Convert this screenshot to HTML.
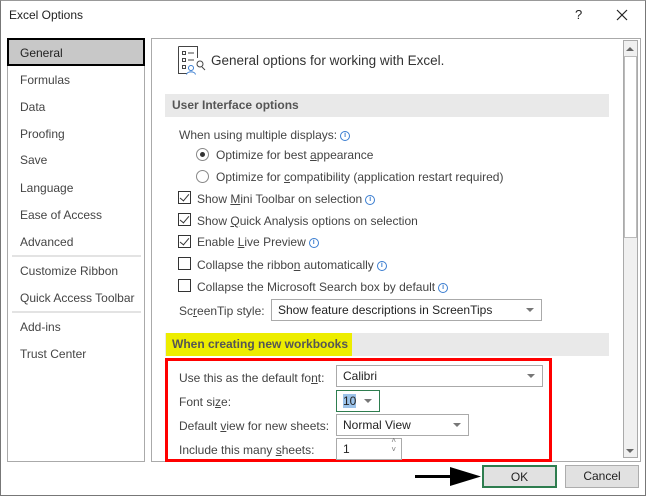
<!DOCTYPE html>
<html><head><meta charset="utf-8"><style>
*{margin:0;padding:0;box-sizing:border-box}
body{width:647px;height:496px;background:#fff;font-family:"Liberation Sans",sans-serif;font-size:12px;color:#444;position:relative;overflow:hidden}
.a{position:absolute;white-space:nowrap}
.win{position:absolute;left:0;top:0;width:646px;height:496px;border:1px solid #777;border-top-color:#999}
.nav{position:absolute;left:7px;top:38px;width:138px;height:424px;border:1px solid #aaa}
.ni{position:absolute;left:12px}
.sep{position:absolute;left:4px;width:129px;height:2px;background:#e3e3e3}
.main{position:absolute;left:151px;top:38px;width:490px;height:424px;border:1px solid #aaa}
.hdr{position:absolute;left:165px;width:444px;height:23px;background:#e9e9e9}
.cb{position:absolute;width:13px;height:13px;border:1px solid #333;background:#fff}
.cb.c::after{content:"";position:absolute;left:3px;top:0px;width:4px;height:8px;border:solid #333;border-width:0 1.3px 1.3px 0;transform:rotate(40deg)}
.rd{position:absolute;width:13px;height:13px;border:1px solid #888;border-radius:50%;background:#fff}
.rd.c::after{content:"";position:absolute;left:3px;top:3px;width:5px;height:5px;border-radius:50%;background:#333}
.info{display:inline-block;width:10px;height:10px;border:1px solid #3a7dd0;border-radius:50%;font-size:7px;line-height:8px;text-align:center;color:#3a7dd0;vertical-align:2px;margin-left:3px;font-weight:bold}
.dd{position:absolute;border:1px solid #aaa;background:#fff;padding-left:6px;line-height:20px}
.dd .tri{position:absolute;right:7px;top:8px;width:0;height:0;border-left:4px solid transparent;border-right:4px solid transparent;border-top:4px solid #777}
.btn{position:absolute;top:465px;height:23px;background:#e1e1e1;border:1px solid #adadad;text-align:center;line-height:21px;color:#222;font-size:12px}
u{text-decoration:underline}
</style></head><body>
<div class="win"></div>
<div class="a" style="left:9px;top:8px;font-size:12px;color:#222">Excel Options</div>
<div class="a" style="left:575px;top:7px;font-size:13px;color:#222">?</div>
<svg class="a" style="left:616px;top:9px" width="12" height="12"><path d="M1 1L11 11M11 1L1 11" stroke="#222" stroke-width="1.2"/></svg>

<div class="nav">
 <div style="position:absolute;left:-1px;top:-1px;width:138px;height:28px;background:#c8c8c8;border:2px solid #000"></div>
 <div class="ni" style="top:7px;color:#222">General</div>
 <div class="ni" style="top:34px">Formulas</div>
 <div class="ni" style="top:61px">Data</div>
 <div class="ni" style="top:88px">Proofing</div>
 <div class="ni" style="top:114px">Save</div>
 <div class="ni" style="top:142px">Language</div>
 <div class="ni" style="top:169px">Ease of Access</div>
 <div class="ni" style="top:196px">Advanced</div>
 <div class="sep" style="top:216px"></div>
 <div class="ni" style="top:225px">Customize Ribbon</div>
 <div class="ni" style="top:252px">Quick Access Toolbar</div>
 <div class="sep" style="top:272px"></div>
 <div class="ni" style="top:281px">Add-ins</div>
 <div class="ni" style="top:308px">Trust Center</div>
</div>

<div class="main"></div>
<div class="a" style="left:623px;top:40px;width:15px;height:418px;border:1px solid #aaa;background:#f0f0f0"></div>
<div class="a" style="left:624px;top:56px;width:13px;height:182px;background:#fff;border:1px solid #bbb"></div>
<div class="a" style="left:626px;top:47px;width:0;height:0;border-left:4px solid transparent;border-right:4px solid transparent;border-bottom:4px solid #666"></div>
<div class="a" style="left:626px;top:449px;width:0;height:0;border-left:4px solid transparent;border-right:4px solid transparent;border-top:4px solid #666"></div>

<svg class="a" style="left:177px;top:44px" width="30" height="32" fill="none" stroke="#444" stroke-width="1">
<path d="M1.5 2.5V29.5H10M1.5 2.5H20.5V14"/>
<rect x="5.5" y="7.5" width="3" height="3"/><path d="M11 9H17"/>
<rect x="5.5" y="14.5" width="3" height="3"/><path d="M11 16H17"/>
<rect x="5.5" y="21.5" width="3" height="3"/>
<circle cx="14" cy="24" r="2.5" stroke="#3a7dd0"/><path d="M9.5 30.5C10 27 18 27 18.5 30.5" stroke="#3a7dd0"/>
<circle cx="23" cy="20" r="3"/><path d="M25 23L28 26"/>
</svg>
<div class="a" style="left:211px;top:53px;font-size:13.5px;color:#333">General options for working with Excel.</div>

<div class="hdr" style="top:94px"></div>
<div class="a" style="left:172px;top:98px;font-weight:bold;color:#555">User Interface options</div>

<div class="a" style="left:179px;top:128px">When using multiple displays:<span class="info">i</span></div>
<div class="rd c" style="left:196px;top:148px"></div><div class="a" style="left:216px;top:148px">Optimize for best <u>a</u>ppearance</div>
<div class="rd" style="left:196px;top:170px"></div><div class="a" style="left:216px;top:170px">Optimize for <u>c</u>ompatibility (application restart required)</div>
<div class="cb c" style="left:178px;top:191px"></div><div class="a" style="left:197px;top:192px">Show <u>M</u>ini Toolbar on selection<span class="info">i</span></div>
<div class="cb c" style="left:178px;top:213px"></div><div class="a" style="left:197px;top:214px">Show <u>Q</u>uick Analysis options on selection</div>
<div class="cb c" style="left:178px;top:235px"></div><div class="a" style="left:197px;top:235px">Enable <u>L</u>ive Preview<span class="info">i</span></div>
<div class="cb" style="left:178px;top:257px"></div><div class="a" style="left:197px;top:258px">Collapse the ribbo<u>n</u> automatically<span class="info">i</span></div>
<div class="cb" style="left:178px;top:279px"></div><div class="a" style="left:197px;top:280px">Collapse the Microsoft Search box by default<span class="info">i</span></div>
<div class="a" style="left:179px;top:304px">Sc<u>r</u>eenTip style:</div>
<div class="dd" style="left:271px;top:299px;width:271px;height:22px;color:#222">Show feature descriptions in ScreenTips<span class="tri"></span></div>

<div class="hdr" style="top:333px"></div>
<div class="a" style="left:166px;top:333px;width:186px;height:23px;background:#eded00"></div>
<div class="a" style="left:172px;top:337px;font-weight:bold;color:#555">When creating new workbooks</div>
<div class="a" style="left:165px;top:358px;width:387px;height:104px;border:3px solid #f00"></div>
<div class="a" style="left:179px;top:371px">Use this as the default fo<u>n</u>t:</div>
<div class="dd" style="left:336px;top:365px;width:207px;height:22px;color:#222">Calibri<span class="tri"></span></div>
<div class="a" style="left:179px;top:395px">Font si<u>z</u>e:</div>
<div class="dd" style="left:336px;top:390px;width:44px;height:22px;border-color:#2e7d4f;color:#222;padding-left:6px"><span style="background:#9cc3ea">10</span><span class="tri"></span></div>
<div class="a" style="left:179px;top:419px">Default <u>v</u>iew for new sheets:</div>
<div class="dd" style="left:336px;top:414px;width:133px;height:22px;color:#222">Normal View<span class="tri"></span></div>
<div class="a" style="left:179px;top:443px">Include this many <u>s</u>heets:</div>
<div class="dd" style="left:336px;top:438px;width:66px;height:22px;color:#222">1<span style="position:absolute;right:5px;top:-3px;font-size:8px;color:#777;line-height:9px">˄<br>˅</span></div>

<svg class="a" style="left:414px;top:466px" width="68" height="22"><path d="M1 10.5H40" stroke="#000" stroke-width="3"/><path d="M36 1L67 10.5L36 20Z" fill="#000"/></svg>
<div class="btn" style="left:482px;width:75px;border:2px solid #2e7d4f">OK</div>
<div class="btn" style="left:565px;width:74px">Cancel</div>
</body></html>
